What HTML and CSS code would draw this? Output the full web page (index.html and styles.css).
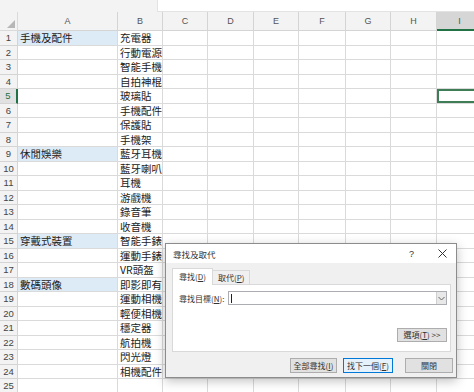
FILE: index.html
```html
<!DOCTYPE html>
<html lang="zh-Hant">
<head>
    <meta charset="UTF-8">
    <title>尋找及取代</title>
    <link rel="stylesheet" href="styles.css">
</head>
<body>
    <div class="app">
        <div class="topbar">
            <div class="topbar-left"></div>
            <div class="formula"></div>
        </div>
        <div class="sheet" id="sheet"></div>

        <div class="dialog" role="dialog" aria-label="尋找及取代">
            <div class="dlg-title">
                <span class="dlg-name">尋找及取代</span>
                <span class="dlg-help">?</span>
                <span class="dlg-close">
                    <svg width="9" height="9" viewBox="0 0 9 9"><path d="M0.5 0.5 L8.5 8.5 M8.5 0.5 L0.5 8.5" stroke="#333" stroke-width="1" fill="none"/></svg>
                </span>
            </div>
            <div class="dlg-body">
                <div class="tabs">
                    <div class="tab active">尋找(<u>D</u>)</div>
                    <div class="tab">取代(<u>P</u>)</div>
                </div>
                <div class="panel">
                    <div class="find-row">
                        <label class="find-label">尋找目標(<u>N</u>):</label>
                        <div class="combo">
                            <span class="caret"></span>
                            <span class="drop">
                                <svg width="7" height="5" viewBox="0 0 7 5"><path d="M0.5 1 L3.5 4 L6.5 1" stroke="#666" stroke-width="1" fill="none"/></svg>
                            </span>
                        </div>
                    </div>
                    <div class="opt-row">
                        <button class="btn btn-options">選項(<u>T</u>) &gt;&gt;</button>
                    </div>
                </div>
                <div class="footer">
                    <button class="btn btn-all">全部尋找(<u>I</u>)</button>
                    <button class="btn btn-next">找下一個(<u>F</u>)</button>
                    <button class="btn btn-close">關閉</button>
                </div>
            </div>
        </div>
    </div>

    <script>
        const cols = ['A', 'B', 'C', 'D', 'E', 'F', 'G', 'H', 'I'];
        const rows = [
            ['手機及配件', '充電器'],
            ['', '行動電源'],
            ['', '智能手機'],
            ['', '自拍神棍'],
            ['', '玻璃貼'],
            ['', '手機配件'],
            ['', '保護貼'],
            ['', '手機架'],
            ['休閒娛樂', '藍牙耳機'],
            ['', '藍牙喇叭'],
            ['', '耳機'],
            ['', '游戲機'],
            ['', '錄音筆'],
            ['', '收音機'],
            ['穿戴式裝置', '智能手錶'],
            ['', '運動手錶'],
            ['', 'VR頭盔'],
            ['數碼頭像', '即影即有'],
            ['', '運動相機'],
            ['', '輕便相機'],
            ['', '穩定器'],
            ['', '航拍機'],
            ['', '閃光燈'],
            ['', '相機配件'],
            ['', '']
        ];
        const activeCol = 'I';
        const activeRow = 5;

        const sheet = document.getElementById('sheet');

        function addCell(cls, text) {
            const div = document.createElement('div');
            div.className = cls;
            div.textContent = text;
            sheet.appendChild(div);
        }

        addCell('corner', '');
        cols.forEach(c => addCell(c === activeCol ? 'col-head selected' : 'col-head', c));

        rows.forEach((r, i) => {
            const n = i + 1;
            addCell(n === activeRow ? 'row-head selected' : 'row-head', n);
            cols.forEach((c, j) => {
                let cls = 'cell';
                if (j === 0 && r[0]) cls += ' group';
                if (n === activeRow && c === activeCol) cls += ' active';
                addCell(cls, j < 2 ? r[j] : '');
            });
        });
    </script>
</body>
</html>
```

FILE: styles.css
```css
body {
    margin: 0;
    background-color: #FFFFFF;
    font-family: "Noto Sans CJK TC", "Noto Sans", sans-serif;
    color: #222222;
    overflow: hidden;
}
.app {
    position: relative;
    width: 474px;
    height: 392px;
    overflow: hidden;
}
.topbar {
    display: flex;
    height: 12px;
    background-color: #F3F3F3;
}
.topbar-left {
    width: 157px;
}
.formula {
    flex: 1;
    background-color: #FFFFFF;
    border-left: 1px solid #E3E3E3;
    border-bottom: 1px solid #E3E3E3;
}
.sheet {
    display: grid;
    grid-template-columns: 18px 100px 45px 45px 46px 45px 47px 45px 46px 46px;
    grid-template-rows: 19px;
    grid-auto-rows: 14.5px;
}
.sheet > div {
    box-sizing: border-box;
    border-right: 1px solid #DADADA;
    border-bottom: 1px solid #DADADA;
    white-space: nowrap;
    overflow: hidden;
}
.corner {
    position: relative;
    background-color: #F3F3F3;
}
.corner::after {
    content: "";
    position: absolute;
    right: 2px;
    bottom: 2px;
    border-style: solid;
    border-width: 0 0 8px 8px;
    border-color: transparent transparent #B7B7B7 transparent;
}
.col-head {
    background-color: #F3F3F3;
    border-color: #D4D4D4 !important;
    text-align: center;
    font-family: "Liberation Sans", sans-serif;
    font-size: 9px;
    line-height: 19px;
    color: #555555;
}
.col-head.selected {
    background-color: #D6D6D6;
    border-bottom: 2px solid #217346 !important;
    color: #217346;
}
.row-head {
    background-color: #F3F3F3;
    border-color: #D4D4D4 !important;
    text-align: center;
    font-family: "Liberation Sans", sans-serif;
    font-size: 9.5px;
    line-height: 14px;
    color: #444444;
}
.row-head.selected {
    background-color: #E1E1E1;
    border-right: 2px solid #217346 !important;
    color: #217346;
}
.cell {
    padding-left: 2px;
    font-size: 10.5px;
    line-height: 14px;
    color: #222222;
}
.cell.group {
    background-color: #DDEBF7;
}
.cell.active {
    box-shadow: inset 0 0 0 2px #3E7D55;
}

/* find & replace dialog */
.dialog {
    position: absolute;
    left: 165px;
    top: 243px;
    width: 292px;
    height: 135px;
    box-sizing: border-box;
    border: 1px solid #8C8C8C;
    background-color: #F0F0F0;
    box-shadow: 0 3px 10px rgba(0, 0, 0, 0.25);
    font-size: 8px;
    color: #333333;
    display: flex;
    flex-direction: column;
}
.dlg-title {
    display: flex;
    align-items: center;
    height: 19px;
    background-color: #FFFFFF;
    padding-left: 7px;
    font-size: 8.5px;
}
.dlg-name {
    flex: 1;
}
.dlg-help {
    width: 8px;
    margin-right: 21px;
    font-family: "Liberation Sans", sans-serif;
    font-size: 9px;
}
.dlg-close {
    display: flex;
    margin-right: 9px;
}
.dlg-body {
    flex: 1;
    padding: 4px 5px 0 6px;
}
.tabs {
    display: flex;
    align-items: flex-end;
    height: 17px;
}
.tab {
    box-sizing: border-box;
    height: 14px;
    line-height: 13px;
    padding: 0 5px;
    border: 1px solid #D9D9D9;
    border-bottom: none;
    background-color: #F0F0F0;
    color: #333333;
}
.tab.active {
    height: 17px;
    line-height: 16px;
    padding: 0 6px;
    background-color: #FFFFFF;
    margin-bottom: -1px;
    position: relative;
    z-index: 1;
}
.tab + .tab {
    border-left: none;
}
.panel {
    box-sizing: border-box;
    height: 68px;
    background-color: #FFFFFF;
    border: 1px solid #D9D9D9;
    padding: 6px 3px 0 6px;
    display: flex;
    flex-direction: column;
}
.find-row {
    display: flex;
    align-items: center;
    height: 14px;
}
.find-label {
    width: 49px;
    flex-shrink: 0;
}
.combo {
    flex: 1;
    box-sizing: border-box;
    height: 14px;
    border: 1px solid #ABADB3;
    display: flex;
    align-items: center;
    justify-content: space-between;
}
.caret {
    width: 1px;
    height: 9px;
    margin-left: 2px;
    background-color: #222222;
}
.drop {
    box-sizing: border-box;
    width: 10px;
    height: 12px;
    background-color: #E8E8E8;
    border-left: 1px solid #CFCFCF;
    display: flex;
    align-items: center;
    justify-content: center;
}
.opt-row {
    display: flex;
    justify-content: flex-end;
    margin-top: 23px;
}
.btn {
    box-sizing: border-box;
    height: 15px;
    padding: 0;
    border: 1px solid #ADADAD;
    background-color: #E1E1E1;
    font-family: "Noto Sans CJK TC", "Noto Sans", sans-serif;
    font-size: 8px;
    line-height: 13px;
    color: #333333;
}
.btn-options {
    width: 50px;
    height: 14px;
    line-height: 12px;
}
.footer {
    display: flex;
    justify-content: flex-end;
    margin-top: 6px;
    margin-right: -2px;
}
.btn-all {
    width: 47px;
}
.btn-next {
    width: 50px;
    margin-left: 6px;
    border-color: #0078D7;
    background-color: #E5F1FB;
}
.btn-close {
    width: 48px;
    margin-left: 12px;
}
```
